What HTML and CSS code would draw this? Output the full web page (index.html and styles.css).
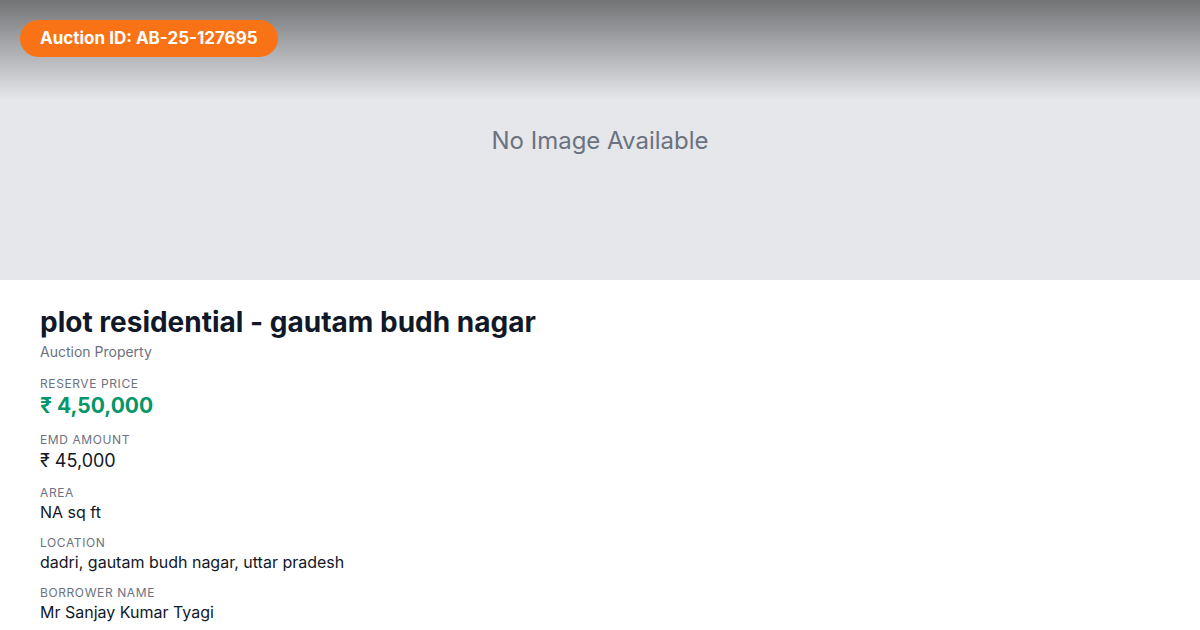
FILE: index.html
```html
<!DOCTYPE html>
<html lang="en">
<head>
  <meta charset="UTF-8" />
  <meta name="viewport" content="width=device-width, initial-scale=1.0"/>
  <title>Auction Property</title>
  <link rel="stylesheet" href="styles.css">
</head>
<body>

  <!-- Image area -->
  <div class="hero">
    <div class="hero-shade"></div>
    <span class="badge">Auction ID: AB-25-127695</span>
    <p class="no-image">No Image Available</p>
  </div>

  <!-- Details -->
  <div class="details">
    <h1 class="title">plot residential - gautam budh nagar</h1>
    <p class="subtitle">Auction Property</p>

    <div class="field field-price">
      <div class="label">Reserve Price</div>
      <div class="value price">₹ 4,50,000</div>
    </div>

    <div class="field field-emd">
      <div class="label">EMD Amount</div>
      <div class="value emd">₹ 45,000</div>
    </div>

    <div class="field">
      <div class="label">Area</div>
      <div class="value">NA sq ft</div>
    </div>

    <div class="field">
      <div class="label">Location</div>
      <div class="value">dadri, gautam budh nagar, uttar pradesh</div>
    </div>

    <div class="field">
      <div class="label">Borrower Name</div>
      <div class="value">Mr Sanjay Kumar Tyagi</div>
    </div>
  </div>

</body>
</html>
```

FILE: styles.css
```css
body {
  margin: 0;
  font-family: Inter, "Noto Sans", sans-serif;
  background: white;
  color: #111827;
  height: 630px;
  overflow: hidden;
}

.hero {
  position: relative;
  height: 280px;
  background: #e5e7eb;
  display: flex;
  align-items: center;
  justify-content: center;
}

.hero-shade {
  position: absolute;
  top: 0;
  left: 0;
  right: 0;
  height: 100px;
  background: linear-gradient(to bottom, rgba(0,0,0,0.5), rgba(0,0,0,0));
}

.badge {
  position: absolute;
  top: 20px;
  left: 20px;
  background: #f97316;
  color: white;
  font-weight: 700;
  font-size: 17px;
  line-height: 21px;
  padding: 8px 20px;
  border-radius: 999px;
}

.no-image {
  margin: 0;
  font-size: 24px;
  color: #6b7280;
}

.details {
  padding: 24px 40px 0;
}

.title {
  margin: 0;
  font-size: 28px;
  line-height: 36px;
  font-weight: 700;
}

.subtitle {
  margin: 2px 0 14px;
  font-size: 14px;
  line-height: 20px;
  color: #6b7280;
}

.field {
  margin-bottom: 12px;
}

.field-price {
  margin-bottom: 12px;
}

.field-emd {
  margin-bottom: 11px;
}

.label {
  font-size: 12px;
  line-height: 16px;
  color: #6b7280;
  text-transform: uppercase;
  letter-spacing: 0.05em;
}

.value {
  font-size: 16px;
  line-height: 22px;
}

.price {
  font-size: 21px;
  line-height: 28px;
  font-weight: 700;
  color: #059669;
}

.emd {
  font-size: 18px;
  line-height: 26px;
}
```
